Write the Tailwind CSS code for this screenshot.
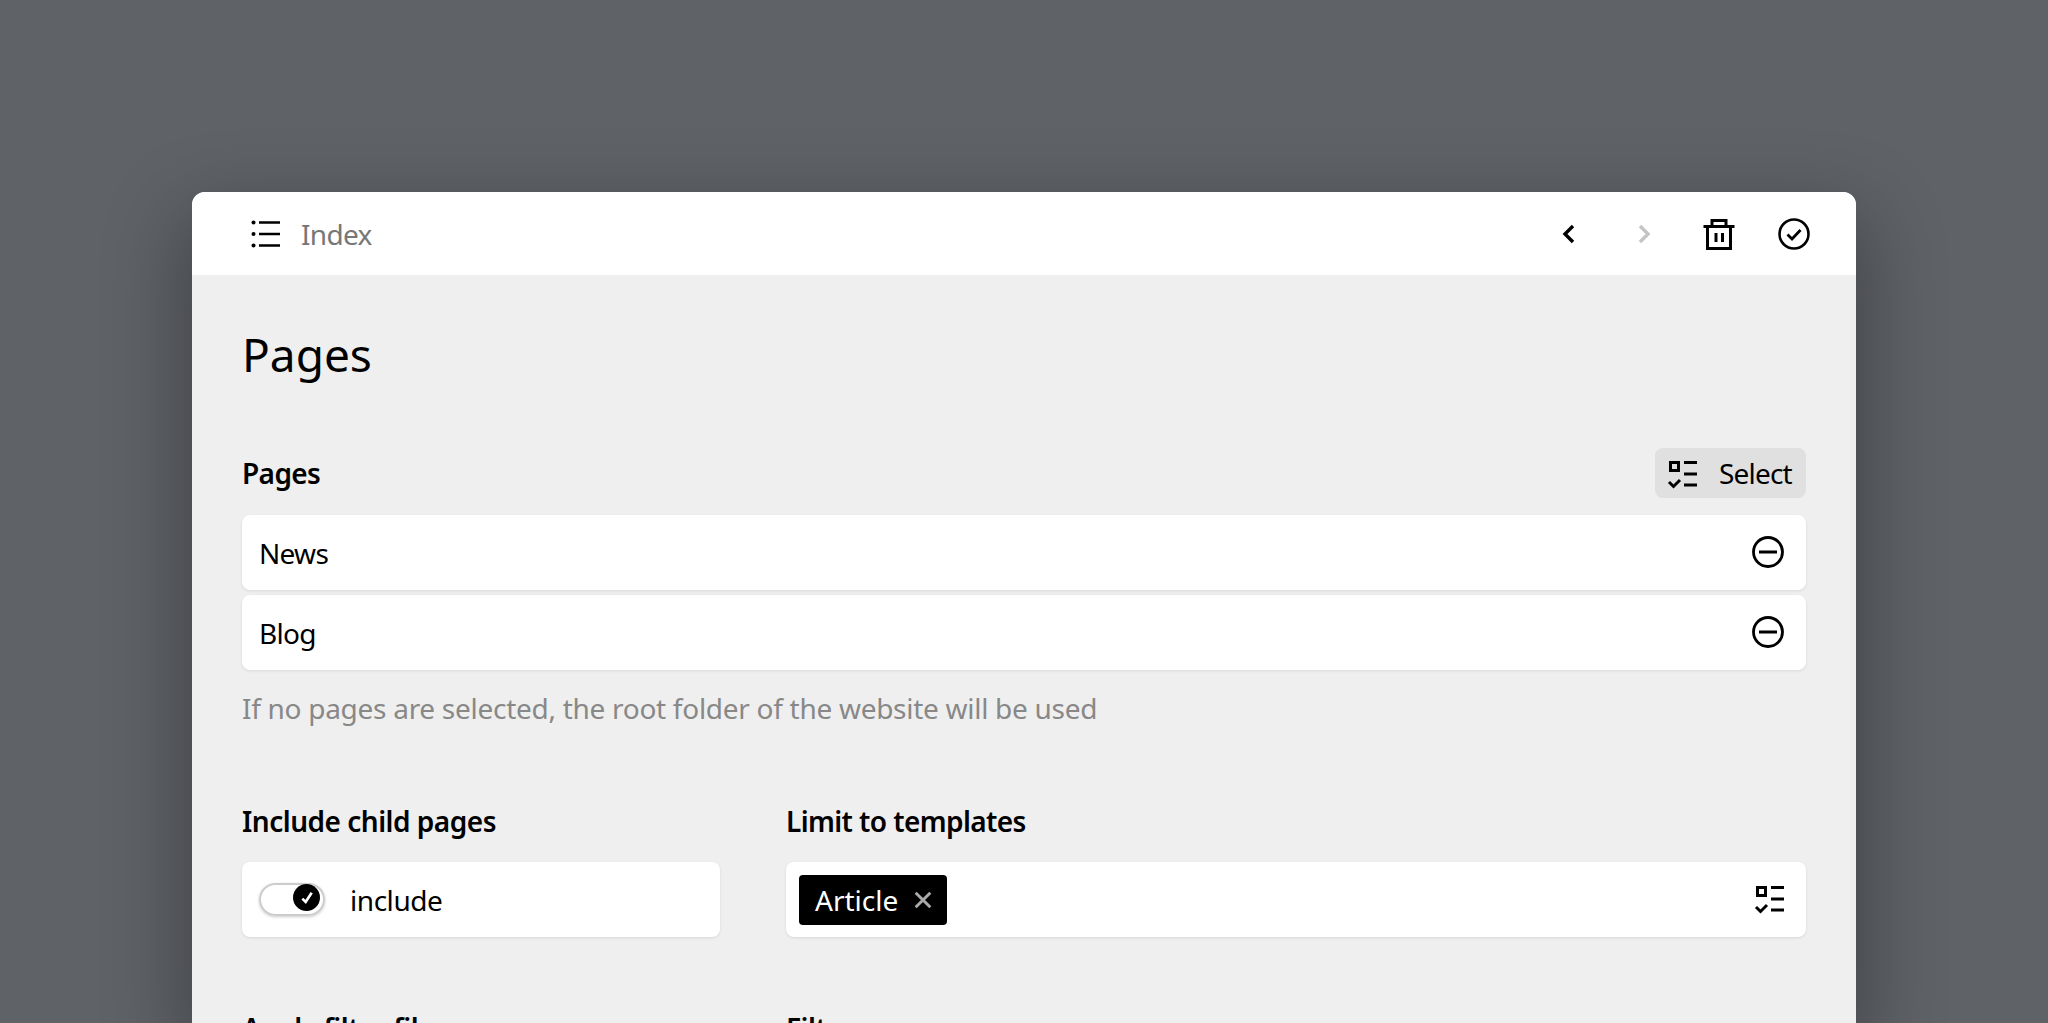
<!DOCTYPE html>
<html><head><meta charset="utf-8"><script src="https://cdn.jsdelivr.net/npm/@tailwindcss/browser@4"></script></head>
<body class="m-0 h-[1023px] overflow-hidden bg-[#5f6267] font-['Noto_Sans','Open_Sans',sans-serif] text-black">
<div class="pt-[192px] pl-[192px]">
<div class="w-[1664px] h-[831px] rounded-t-[13px] bg-[#efefef] shadow-[0_30px_80px_10px_rgba(0,0,0,0.3)] overflow-hidden">
<header class="h-[83px] bg-white flex items-center pl-[57px] pr-[46px]">
<svg class="w-[32px] h-[32px]" viewBox="0 0 32 32" fill="none" stroke="#000" stroke-width="2.6"><path d="M10 4.5h21M10 16h21M10 27.5h21"/><circle cx="4.5" cy="4.5" r="2" fill="#000" stroke="none"/><circle cx="4.5" cy="16" r="2" fill="#000" stroke="none"/><circle cx="4.5" cy="27.5" r="2" fill="#000" stroke="none"/></svg>
<span class="ml-[20px] text-[28px] text-[#777] tracking-[-0.7px]">Index</span>
<div class="ml-auto flex items-center gap-[43px]">
<svg class="w-[32px] h-[32px]" viewBox="0 0 32 32" fill="none" stroke="#000" stroke-width="3.4"><path d="M20 8l-8 8 8 8"/></svg>
<svg class="w-[32px] h-[32px]" viewBox="0 0 32 32" fill="none" stroke="#c4c4c4" stroke-width="3.4"><path d="M12 8l8 8-8 8"/></svg>
<svg class="w-[32px] h-[32px]" viewBox="0 0 32 32" fill="none" stroke="#000" stroke-width="3"><path d="M0.5 8.5h31M9 8.5V2.5h14v6M4.5 8.5v22h23v-22"/><path d="M13 15v9M19.5 15v9"/></svg>
<svg class="w-[32px] h-[32px]" viewBox="0 0 32 32" fill="none" stroke="#000" stroke-width="2.6"><circle cx="16" cy="16" r="14.5"/><path d="M9.5 16.5l4.5 4.5 8.5-9" stroke-width="2.8"/></svg>
</div>
</header>
<main class="px-[50px]">
<h1 class="mt-[49px] text-[46px] leading-[60px] font-normal tracking-[0px]">Pages</h1>
<div class="mt-[64px] flex items-center justify-between h-[50px]">
<label class="text-[28px] font-semibold tracking-[-0.6px]">Pages</label>
<div class="w-[151px] h-[50px] rounded-[8px] bg-[#e0e0e0] flex items-center pl-[12px]">
<svg class="mt-[3px] w-[32px] h-[32px]" viewBox="0 0 32 32" fill="none" stroke="#000" stroke-width="3"><path d="M3.5 3.5h8v8h-8zM17 3.5h13M17 15h13M17 26h13"/><path d="M2 23l4.5 4.5L13 21"/></svg>
<span class="ml-[20px] text-[28px] tracking-[-0.8px]">Select</span>
</div>
</div>
<div class="mt-[17px] flex flex-col gap-[5px]">
<div class="h-[75px] rounded-[8px] bg-white shadow-[0_1px_3px_rgba(0,0,0,0.1)] flex items-center justify-between pl-[17px] pr-[22px]"><span class="text-[28px] tracking-[-0.7px]">News</span>
<svg class="mb-[2px] w-[32px] h-[32px]" viewBox="0 0 32 32" fill="none" stroke="#000" stroke-width="2.8"><circle cx="16" cy="16" r="14.5"/><path d="M7 16h18" stroke-width="3"/></svg></div>
<div class="h-[75px] rounded-[8px] bg-white shadow-[0_1px_3px_rgba(0,0,0,0.1)] flex items-center justify-between pl-[17px] pr-[22px]"><span class="text-[28px] tracking-[-0.7px]">Blog</span>
<svg class="mb-[2px] w-[32px] h-[32px]" viewBox="0 0 32 32" fill="none" stroke="#000" stroke-width="2.8"><circle cx="16" cy="16" r="14.5"/><path d="M7 16h18" stroke-width="3"/></svg></div>
</div>
<p class="mt-[19px] text-[28px] leading-[38px] text-[#888] tracking-[-0.28px]">If no pages are selected, the root folder of the website will be used</p>
<div class="mt-[76px] grid grid-cols-[478px_1fr] gap-x-[66px]">
<div>
<label class="block text-[28px] leading-[36px] font-semibold tracking-[-0.5px]">Include child pages</label>
<div class="mt-[23px] h-[75px] rounded-[8px] bg-white shadow-[0_1px_3px_rgba(0,0,0,0.1)] flex items-center pl-[17px]">
<div class="relative w-[66px] h-[33px] rounded-full border-2 border-[#ccc] shadow-[0_1px_3px_rgba(0,0,0,0.2)]">
<div class="absolute right-[3px] top-[-1px] w-[27px] h-[27px] rounded-full bg-black flex items-center justify-center"><svg class="w-[16px] h-[16px]" viewBox="0 0 24 24" fill="none" stroke="#fff" stroke-width="4"><path d="M5 13l5 5 9-14"/></svg></div>
</div>
<span class="ml-[25px] text-[28px] tracking-[-0.45px]">include</span>
</div>
</div>
<div>
<label class="block text-[28px] leading-[36px] font-semibold tracking-[-0.6px]">Limit to templates</label>
<div class="mt-[23px] h-[75px] rounded-[8px] bg-white shadow-[0_1px_3px_rgba(0,0,0,0.1)] flex items-center justify-between pl-[13px] pr-[20px]">
<div class="w-[148px] h-[50px] rounded-[4px] bg-black flex items-center pl-[16px]"><span class="text-[28px] text-white tracking-[0px]">Article</span><svg class="ml-[14px] w-[22px] h-[22px]" viewBox="0 0 24 24" fill="none" stroke="#aaa" stroke-width="3.2"><path d="M4 4l16 16M20 4L4 20"/></svg></div>
<svg class="w-[32px] h-[32px]" viewBox="0 0 32 32" fill="none" stroke="#000" stroke-width="3"><path d="M3.5 3.5h8v8h-8zM17 3.5h13M17 15h13M17 26h13"/><path d="M2 23l4.5 4.5L13 21"/></svg>
</div>
</div>
<label class="mt-[73px] block text-[28px] leading-[36px] font-semibold tracking-[-0.5px]">Apply filter file</label>
<label class="mt-[73px] block text-[28px] leading-[36px] font-semibold tracking-[-0.5px]">Filter</label>
</div>
</main>
</div>
</div>
</body></html>
